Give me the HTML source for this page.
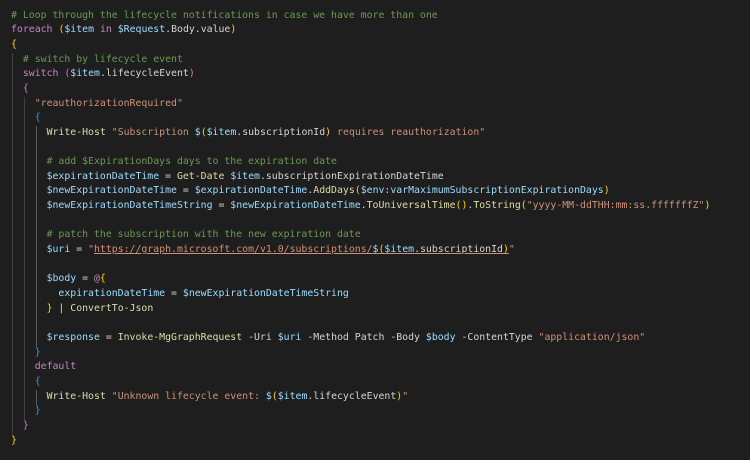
<!DOCTYPE html>
<html><head><meta charset="utf-8"><style>
body{margin:0;background:#1e1e1e;width:750px;height:460px;overflow:hidden;position:relative}
pre{position:absolute;left:11px;top:8.6px;margin:0;font-family:"DejaVu Sans Mono","Liberation Mono",monospace;font-size:9.85px;line-height:14.66px;color:#d4d4d4;white-space:pre}
.c{color:#6a9955}.k{color:#c586c0}.v{color:#9cdcfe}.s{color:#ce9178}.f{color:#dcdcaa}
.b1{color:#ffd700}.b2{color:#da70d6}.b3{color:#179fff}
.u{text-decoration:underline;text-decoration-color:#ce9178}
.g{position:absolute;width:1px;background:#404040}
</style></head><body>
<div class="g" style="left:12px;top:53px;height:381px"></div>
<div class="g" style="left:24px;top:97px;height:323px"></div>
<div class="g" style="left:36px;top:126px;height:221px;background:#5a5a5a"></div>
<div class="g" style="left:36px;top:390px;height:15px;background:#5a5a5a"></div>
<pre><span class="c"># Loop through the lifecycle notifications in case we have more than one</span>
<span class="k">foreach</span> <span class="b1">(</span><span class="v">$item</span> <span class="k">in</span> <span class="v">$Request</span>.Body.value<span class="b1">)</span>
<span class="b1">{</span>
  <span class="c"># switch by lifecycle event</span>
  <span class="k">switch</span> <span class="b2">(</span><span class="v">$item</span>.lifecycleEvent<span class="b2">)</span>
  <span class="b2">{</span>
    <span class="s">"reauthorizationRequired"</span>
    <span class="b3">{</span>
      <span class="f">Write-Host</span> <span class="s">"Subscription </span><span class="v">$</span><span class="b1">(</span><span class="v">$item</span>.subscriptionId<span class="b1">)</span><span class="s"> requires reauthorization"</span>

      <span class="c"># add $ExpirationDays days to the expiration date</span>
      <span class="v">$expirationDateTime</span> = <span class="f">Get-Date</span> <span class="v">$item</span>.subscriptionExpirationDateTime
      <span class="v">$newExpirationDateTime</span> = <span class="v">$expirationDateTime</span>.<span class="f">AddDays</span><span class="b1">(</span><span class="v">$env:varMaximumSubscriptionExpirationDays</span><span class="b1">)</span>
      <span class="v">$newExpirationDateTimeString</span> = <span class="v">$newExpirationDateTime</span>.<span class="f">ToUniversalTime</span><span class="b1">()</span>.<span class="f">ToString</span><span class="b1">(</span><span class="s">"yyyy-MM-ddTHH:mm:ss.fffffffZ"</span><span class="b1">)</span>

      <span class="c"># patch the subscription with the new expiration date</span>
      <span class="v">$uri</span> = <span class="s">"<span class="u">https://graph.microsoft.com/v1.0/subscriptions/</span></span><span class="u"><span class="v">$</span><span class="b1">(</span><span class="v">$item</span>.subscriptionId<span class="b1">)</span></span><span class="s">"</span>

      <span class="v">$body</span> = <span class="k">@</span><span class="b1">{</span>
        <span class="v">expirationDateTime</span> = <span class="v">$newExpirationDateTimeString</span>
      <span class="b1">}</span> | <span class="f">ConvertTo-Json</span>

      <span class="v">$response</span> = <span class="f">Invoke-MgGraphRequest</span> -Uri <span class="v">$uri</span> -Method Patch -Body <span class="v">$body</span> -ContentType <span class="s">"application/json"</span>
    <span class="b3">}</span>
    <span class="k">default</span>
    <span class="b3">{</span>
      <span class="f">Write-Host</span> <span class="s">"Unknown lifecycle event: </span><span class="v">$</span><span class="b1">(</span><span class="v">$item</span>.lifecycleEvent<span class="b1">)</span><span class="s">"</span>
    <span class="b3">}</span>
  <span class="b2">}</span>
<span class="b1">}</span></pre>
</body></html>
